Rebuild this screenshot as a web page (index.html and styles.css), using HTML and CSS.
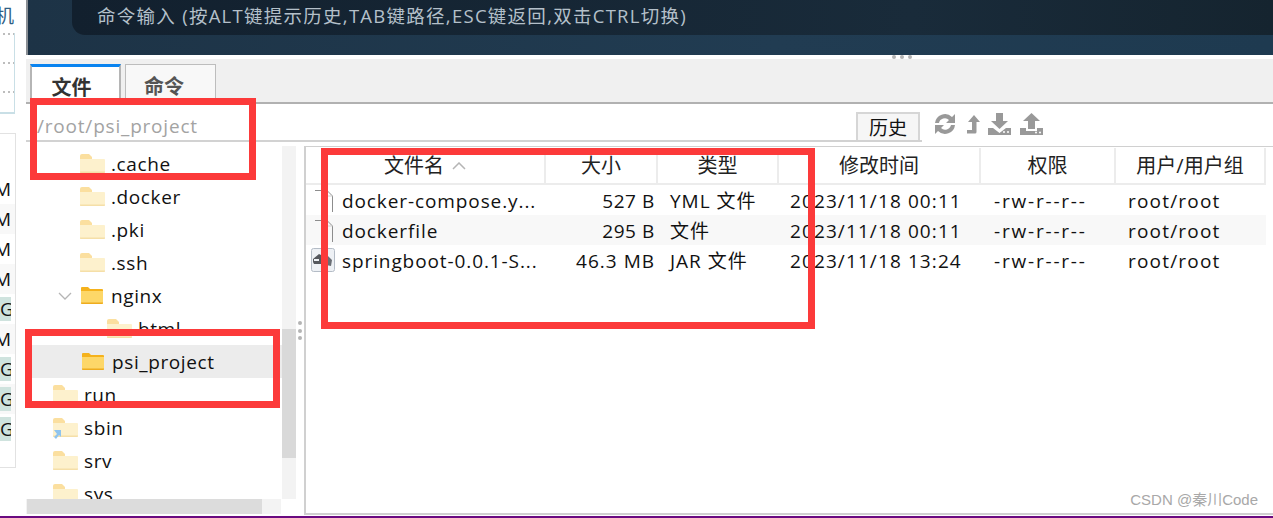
FILE: index.html
```html
<!DOCTYPE html>
<html lang="zh">
<head>
<meta charset="utf-8">
<title>FinalShell</title>
<link rel="stylesheet" href="styles.css">
</head>
<body>
<svg class="defs" width="0" height="0" aria-hidden="true">
  <defs>
    <symbol id="folder-pale" viewBox="0 0 25 19">
      <path d="M0 2a2 2 0 0 1 2-2h7l3 3v16H1a1 1 0 0 1-1-1z" fill="#fbdf9f"/>
      <path d="M0 5h24a1 1 0 0 1 1 1v12a1 1 0 0 1-1 1H1a1 1 0 0 1-1-1z" fill="#fdf1cd"/>
      <path d="M0 17.500h25V18a1 1 0 0 1-1 1H1a1 1 0 0 1-1-1z" fill="#f5dfa8"/>
    </symbol>
    <symbol id="folder-open" viewBox="0 0 22 17">
      <path d="M0 1a1 1 0 0 1 1-1h6l2 2h12a1 1 0 0 1 1 1v3H0z" fill="#f5b21c"/>
      <path d="M0 4h22v12a1 1 0 0 1-1 1H1a1 1 0 0 1-1-1z" fill="#fdd768"/>
      <path d="M0 15.500h22V16a1 1 0 0 1-1 1H1a1 1 0 0 1-1-1z" fill="#eeac1e"/>
    </symbol>
    <symbol id="doc" viewBox="0 0 18 22">
      <path d="M0 .5h12l5.500 5.500v16" fill="none" stroke="#8d8d8d"/>
      <path d="M12 .5V6h5.500" fill="none" stroke="#cfcfcf"/>
    </symbol>
  </defs>
</svg>

<div class="app">
  <div class="workspace">
    <aside class="strip">
      <div class="strip-title">机</div>
      <div class="strip-panel">
        <div class="strip-dots"></div>
        <div class="strip-dots"></div>
        <div class="strip-dots"></div>
      </div>
      <div class="strip-list">
        <div class="strip-row">M</div>
        <div class="strip-row alt">M</div>
        <div class="strip-row">M</div>
        <div class="strip-row alt">M</div>
        <div class="strip-row"><span class="tag">G</span></div>
        <div class="strip-row alt">M</div>
        <div class="strip-row"><span class="tag">G</span></div>
        <div class="strip-row alt"><span class="tag">G</span></div>
        <div class="strip-row"><span class="tag">G</span></div>
      </div>
    </aside>

    <main class="main">
      <section class="terminal">
        <div class="command">命令输入 (按ALT键提示历史,TAB键路径,ESC键返回,双击CTRL切换)</div>
      </section>
      <div class="split-h"><i></i><i></i><i></i></div>
      <nav class="tabs">
        <div class="tab active">文件</div>
        <div class="tab second">命令</div>
      </nav>

      <div class="pathbar">
        <div class="path">
          <span class="path-text">/root/psi_project</span>
          <button class="history">历史</button>
        </div>
        <div class="tools">
          <svg class="tool refresh" viewBox="0 0 22 22"><path d="M1 10a10 10 0 0 1 17-6l3-3v9h-9l3-3a6 6 0 0 0-10 3z" fill="#999"/><path d="M21 12a10 10 0 0 1-17 6l-3 3v-9h9l-3 3a6 6 0 0 0 10-3z" fill="#999"/></svg>
          <svg class="tool up" viewBox="0 0 14 22"><path d="M7 2l6 7H9.500v10a1.500 1.500 0 0 1-1.500 1.500H0V17h5V9H1z" fill="#999"/></svg>
          <svg class="tool dl" viewBox="0 0 23 22"><path d="M8 0h7v8h5l-8.500 8L3 8h5z" fill="#999"/><path d="M0 15h5l6.500 5 6.500-5h5v7H0z" fill="#999"/><circle cx="16" cy="19" r="1" fill="#fff"/><circle cx="20" cy="19" r="1" fill="#fff"/></svg>
          <svg class="tool ul" viewBox="0 0 23 22"><path d="M11.500 0L20 8h-5v8H8V8H3z" fill="#999"/><path d="M0 15h6v3h11v-3h6v7H0z" fill="#999"/><circle cx="16" cy="19.500" r="1" fill="#fff"/><circle cx="20" cy="19.500" r="1" fill="#fff"/></svg>
        </div>
      </div>

      <div class="panes">
        <div class="tree-pane">
          <div class="tree-body">
            <div class="tree">
              <div class="node d3"><svg class="folder"><use href="#folder-pale"/></svg><span>.cache</span></div>
              <div class="node d3"><svg class="folder"><use href="#folder-pale"/></svg><span>.docker</span></div>
              <div class="node d3"><svg class="folder"><use href="#folder-pale"/></svg><span>.pki</span></div>
              <div class="node d3"><svg class="folder"><use href="#folder-pale"/></svg><span>.ssh</span></div>
              <div class="node d2open">
                <svg class="chev" viewBox="0 0 14 8"><path d="M1 1l6 6 6-6" fill="none" stroke="#b5b5b5" stroke-width="1.300"/></svg>
                <svg class="folder-y"><use href="#folder-open"/></svg><span>nginx</span>
              </div>
              <div class="node d4"><svg class="folder"><use href="#folder-pale"/></svg><span>html</span></div>
              <div class="node d3y selected"><svg class="folder-y"><use href="#folder-open"/></svg><span>psi_project</span></div>
              <div class="node d1"><svg class="folder"><use href="#folder-pale"/></svg><span>run</span></div>
              <div class="node d1 link"><svg class="folder"><use href="#folder-pale"/></svg><svg class="shortcut" viewBox="0 0 9 11"><path d="M1 2h7v7L6 7l-3 4-2-2 3-3z" fill="#8fc4ee"/></svg><span>sbin</span></div>
              <div class="node d1"><svg class="folder"><use href="#folder-pale"/></svg><span>srv</span></div>
              <div class="node d1"><svg class="folder"><use href="#folder-pale"/></svg><span>sys</span></div>
            </div>
            <div class="vscroll"><div class="vthumb"></div></div>
          </div>
          <div class="hscroll"><div class="hthumb"></div></div>
        </div>

        <div class="split-v"><i></i><i></i><i></i></div>

        <div class="files">
          <div class="row head">
            <div class="c name">文件名<svg class="sort" viewBox="0 0 14 8"><path d="M1 7l6-6 6 6" fill="none" stroke="#b5b5b5" stroke-width="1.500"/></svg></div>
            <div class="c size">大小</div>
            <div class="c type">类型</div>
            <div class="c time">修改时间</div>
            <div class="c perm">权限</div>
            <div class="c owner">用户/用户组</div>
          </div>
          <div class="row">
            <div class="c name"><svg class="doc"><use href="#doc"/></svg>docker-compose.y...</div>
            <div class="c size">527 B</div>
            <div class="c type">YML 文件</div>
            <div class="c time">2023/11/18 00:11</div>
            <div class="c perm">-rw-r--r--</div>
            <div class="c owner">root/root</div>
          </div>
          <div class="row alt">
            <div class="c name"><svg class="doc"><use href="#doc"/></svg>dockerfile</div>
            <div class="c size">295 B</div>
            <div class="c type">文件</div>
            <div class="c time">2023/11/18 00:11</div>
            <div class="c perm">-rw-r--r--</div>
            <div class="c owner">root/root</div>
          </div>
          <div class="row">
            <div class="c name">
              <svg class="jar" viewBox="0 0 24 24">
                <rect x=".5" y=".5" width="23" height="23" rx="2" fill="#eef1f5" stroke="#b4bcc6"/>
                <path d="M2 11l6-5 2 1v9H3l-1-2z" fill="#55585d"/>
                <path d="M3 11h5v2H3z" fill="#eef1f5"/>
                <path d="M15 6l6 6-1 6-5-1 2-4-3-3z" fill="#6a6e74"/>
                <path d="M10 16h5v4h-5z" fill="#9aa0a6"/>
              </svg>springboot-0.0.1-S...
            </div>
            <div class="c size wide">46.3 MB</div>
            <div class="c type">JAR 文件</div>
            <div class="c time">2023/11/18 13:24</div>
            <div class="c perm">-rw-r--r--</div>
            <div class="c owner">root/root</div>
          </div>
        </div>
      </div>
    </main>
  </div>
  <div class="accent"></div>
  <div class="mark mark-path"></div>
  <div class="mark mark-tree"></div>
  <div class="mark mark-table"></div>
  <div class="watermark">CSDN @秦川Code</div>
</div>
</body>
</html>
```
FILE: styles.css
```css
* { box-sizing: border-box; }
html, body { margin: 0; padding: 0; background: #fff; }
body {
  font-family: "Open Sans", "Noto Sans CJK SC", sans-serif;
  font-size: 19px;
  color: #111;
  overflow: hidden;
}
.defs { position: absolute; }
.app { position: relative; width: 1273px; height: 518px; overflow: hidden; }
.workspace { display: flex; height: 516px; }
.accent { height: 2px; background: #6a0a80; }

/* left strip */
.strip { width: 26px; flex: none; overflow: hidden; }
.strip-title { height: 33px; padding-top: 3px; margin-left: -5px; font-size: 19px; line-height: 26px; color: #2f5f86; }
.strip-panel { width: 15px; height: 81px; border-right: 1px solid #c9dfe6; border-bottom: 2px solid #c9dfe6; }
.strip-dots {
  height: 29px;
  background: radial-gradient(circle at 1px 1px, #bdbdbd 1px, transparent 1.200px) 3px 0 / 5px 3px repeat-x;
}
.strip-list {
  width: 16px;
  height: 335px;
  margin-top: 19px;
  padding-top: 40px;
  border: 1px solid #e2e2e2;
  border-left: 0;
  overflow: hidden;
}
.strip-row { height: 30px; line-height: 30px; font-size: 19px; background: #fff; white-space: nowrap; }
.strip-row { text-indent: -6px; }
.strip-row.alt { background: #f8f8f8; }
.strip-row .tag { display: block; width: 11px; background: #cfe3de; text-indent: 0; overflow: hidden; margin-top: 3px; height: 24px; line-height: 24px; float: left; }

/* main */
.main { flex: 1; min-width: 0; display: flex; flex-direction: column; }
.terminal {
  height: 55px;
  flex: none;
  padding-left: 44px;
  border-left: 2px solid #8a8f94;
  background: linear-gradient(90deg, #1d3346, #213c52 60%, #1e3a50);
}
.command {
  height: 35px;
  padding-left: 25px;
  line-height: 31px;
  font-size: 18.500px;
  letter-spacing: 1.270px;
  color: #b4c0ca;
  white-space: nowrap;
  border-bottom-left-radius: 13px;
  background: linear-gradient(90deg, #12202e, #192b3a 70%, #15242f);
}
.split-h { height: 4px; flex: none; display: flex; gap: 4px; align-items: center; justify-content: flex-start; padding-left: 866px; }
.split-h i { width: 4px; height: 4px; border-radius: 50%; background: #b4b4b4; }

.tabs {
  height: 45px;
  flex: none;
  display: flex;
  align-items: flex-end;
  gap: 4px;
  padding-left: 4px;
  background: #f0f0f0;
  border-bottom: 2px solid #b1b1b1;
}
.tab {
  width: 91px;
  height: 39px;
  margin-bottom: -1px;
  text-align: center;
  font-weight: 700;
  font-size: 20px;
  line-height: 44px;
  color: #555;
  background: #f8f8f8;
  border: 1px solid #bdbdbd;
  border-bottom: 0;
}
.tab.second { padding-right: 13px; }
.tab.active {
  height: 39px;
  padding-right: 8px;
  color: #333;
  background: #fff;
  border: 2px solid #b5b5b5;
  border-top: 3px solid #0a84f0;
  border-bottom: 0;
  line-height: 42px;
}

/* path bar */
.pathbar { height: 42px; flex: none; display: flex; align-items: flex-start; }
.path {
  width: 896px;
  height: 38px;
  flex: none;
  display: flex;
  align-items: flex-end;
  justify-content: space-between;
  padding: 0 2px 0 11px;
  border-bottom: 2px solid #d2d2d2;
}
.path-text { font-size: 19px; line-height: 28px; color: #a3a3a3; letter-spacing: .8px; }
.history {
  width: 64px;
  height: 28px;
  padding: 0;
  font: 19px/24px "Noto Sans CJK SC", sans-serif;
  color: #111;
  background: #f6f6f6;
  border: 2px solid #d6d6d6;
  border-bottom: 0;
}
.tools { display: flex; align-items: center; padding: 9px 0 0 12px; }
.tool { display: block; height: 22px; flex: none; }
.refresh { width: 22px; }
.up { width: 14px; margin-left: 11px; }
.dl { width: 23px; margin-left: 7px; }
.ul { width: 23px; margin-left: 9px; }

/* panes */
.panes { flex: 1; min-height: 0; display: flex; }
.tree-pane { width: 270px; flex: none; display: flex; flex-direction: column; }
.tree-body { height: 353px; flex: none; display: flex; overflow: hidden; }
.tree { width: 256px; flex: none; padding-top: 1px; overflow: hidden; }
.node { height: 33px; display: flex; align-items: center; font-size: 19px; letter-spacing: .6px; white-space: nowrap; position: relative; }
.node span { margin-left: 6px; }
.folder { width: 25px; height: 19px; flex: none; }
.folder-y { width: 22px; height: 17px; flex: none; }
.chev { width: 14px; height: 8px; margin-right: 9px; flex: none; }
.d1 { padding-left: 27px; }
.d2open { padding-left: 32px; }
.d2open .folder-y { margin-left: 0; }
.d2open span { margin-left: 8px; }
.d3 { padding-left: 54px; }
.d3y { padding-left: 56px; }
.d3y span { margin-left: 8px; }
.d4 { padding-left: 81px; }
.selected { background: #ececec; }
.shortcut { position: absolute; left: 27px; top: 17px; width: 9px; height: 11px; }
.vscroll { width: 14px; flex: none; background: #f3f3f3; }
.vthumb { height: 129px; margin-top: 183px; background: #d9d9d9; }
.hscroll { height: 15px; width: 255px; flex: none; padding-left: 1px; background: #f3f3f3; }
.hthumb { width: 235px; height: 15px; background: #dcdcdc; }

.split-v { width: 8px; flex: none; display: flex; flex-direction: column; align-items: center; gap: 3.500px; padding-top: 175px; }
.split-v i { width: 4px; height: 4px; flex: none; border-radius: 50%; background: #b4b4b4; margin-left: 0; }

.files {
  flex: 1;
  min-width: 0;
  height: 369px;
  padding-top: 1px;
  border-top: 1px solid #d0d0d0;
  border-left: 2px solid #d0d0d0;
  border-bottom: 2px solid #d0d0d0;
}
.row { display: flex; height: 30px; width: 960px; font-size: 19px; letter-spacing: .6px; white-space: nowrap; }
.row.alt { background: #f8f8f8; }
.c { flex: none; height: 30px; line-height: 32px; }
.name { width: 240px; padding: 2px 0 0 36px; display: flex; align-items: center; letter-spacing: .9px; }
.size { width: 113px; padding-right: 4px; text-align: right; }
.size.wide { letter-spacing: 1px; }
.type { width: 120px; padding-left: 11px; letter-spacing: 1px; }
.time { width: 202px; padding-left: 11px; letter-spacing: 1.100px; }
.perm { width: 135px; padding-left: 13px; letter-spacing: 1.800px; }
.owner { width: 150px; padding-left: 12px; letter-spacing: 1.200px; }
.doc { width: 18px; height: 22px; margin-left: -27px; margin-right: 9px; flex: none; }
.jar { width: 24px; height: 24px; margin: -2px 7px 0 -31px; flex: none; }

.head { height: 37px; margin-bottom: 0; border-bottom: 2px solid #ececec; }
.head .c {
  padding: 0;
  height: 35px;
  font-size: 20px;
  line-height: 36px;
  letter-spacing: 0;
  text-align: center;
  border-right: 2px solid #ececec;
  color: #222;
}
.head .name { justify-content: center; }
.sort { width: 14px; height: 8px; margin-left: 8px; flex: none; }
.head .size { width: 112px; }
.head .type { width: 121px; }

/* red annotation rectangles drawn over the screenshot */
.mark { position: absolute; border: 7px solid #fc3a3a; pointer-events: none; }
.mark-path { left: 30px; top: 98px; width: 226px; height: 82px; }
.mark-tree { left: 25px; top: 329px; width: 255px; height: 79px; }
.mark-table { left: 321px; top: 148px; width: 494px; height: 181px; }

.watermark {
  position: absolute;
  right: 15px;
  top: 491px;
  font: 15px/18px "Liberation Sans", "Noto Sans CJK SC", sans-serif;
  color: #a8a8a8;
}
```
